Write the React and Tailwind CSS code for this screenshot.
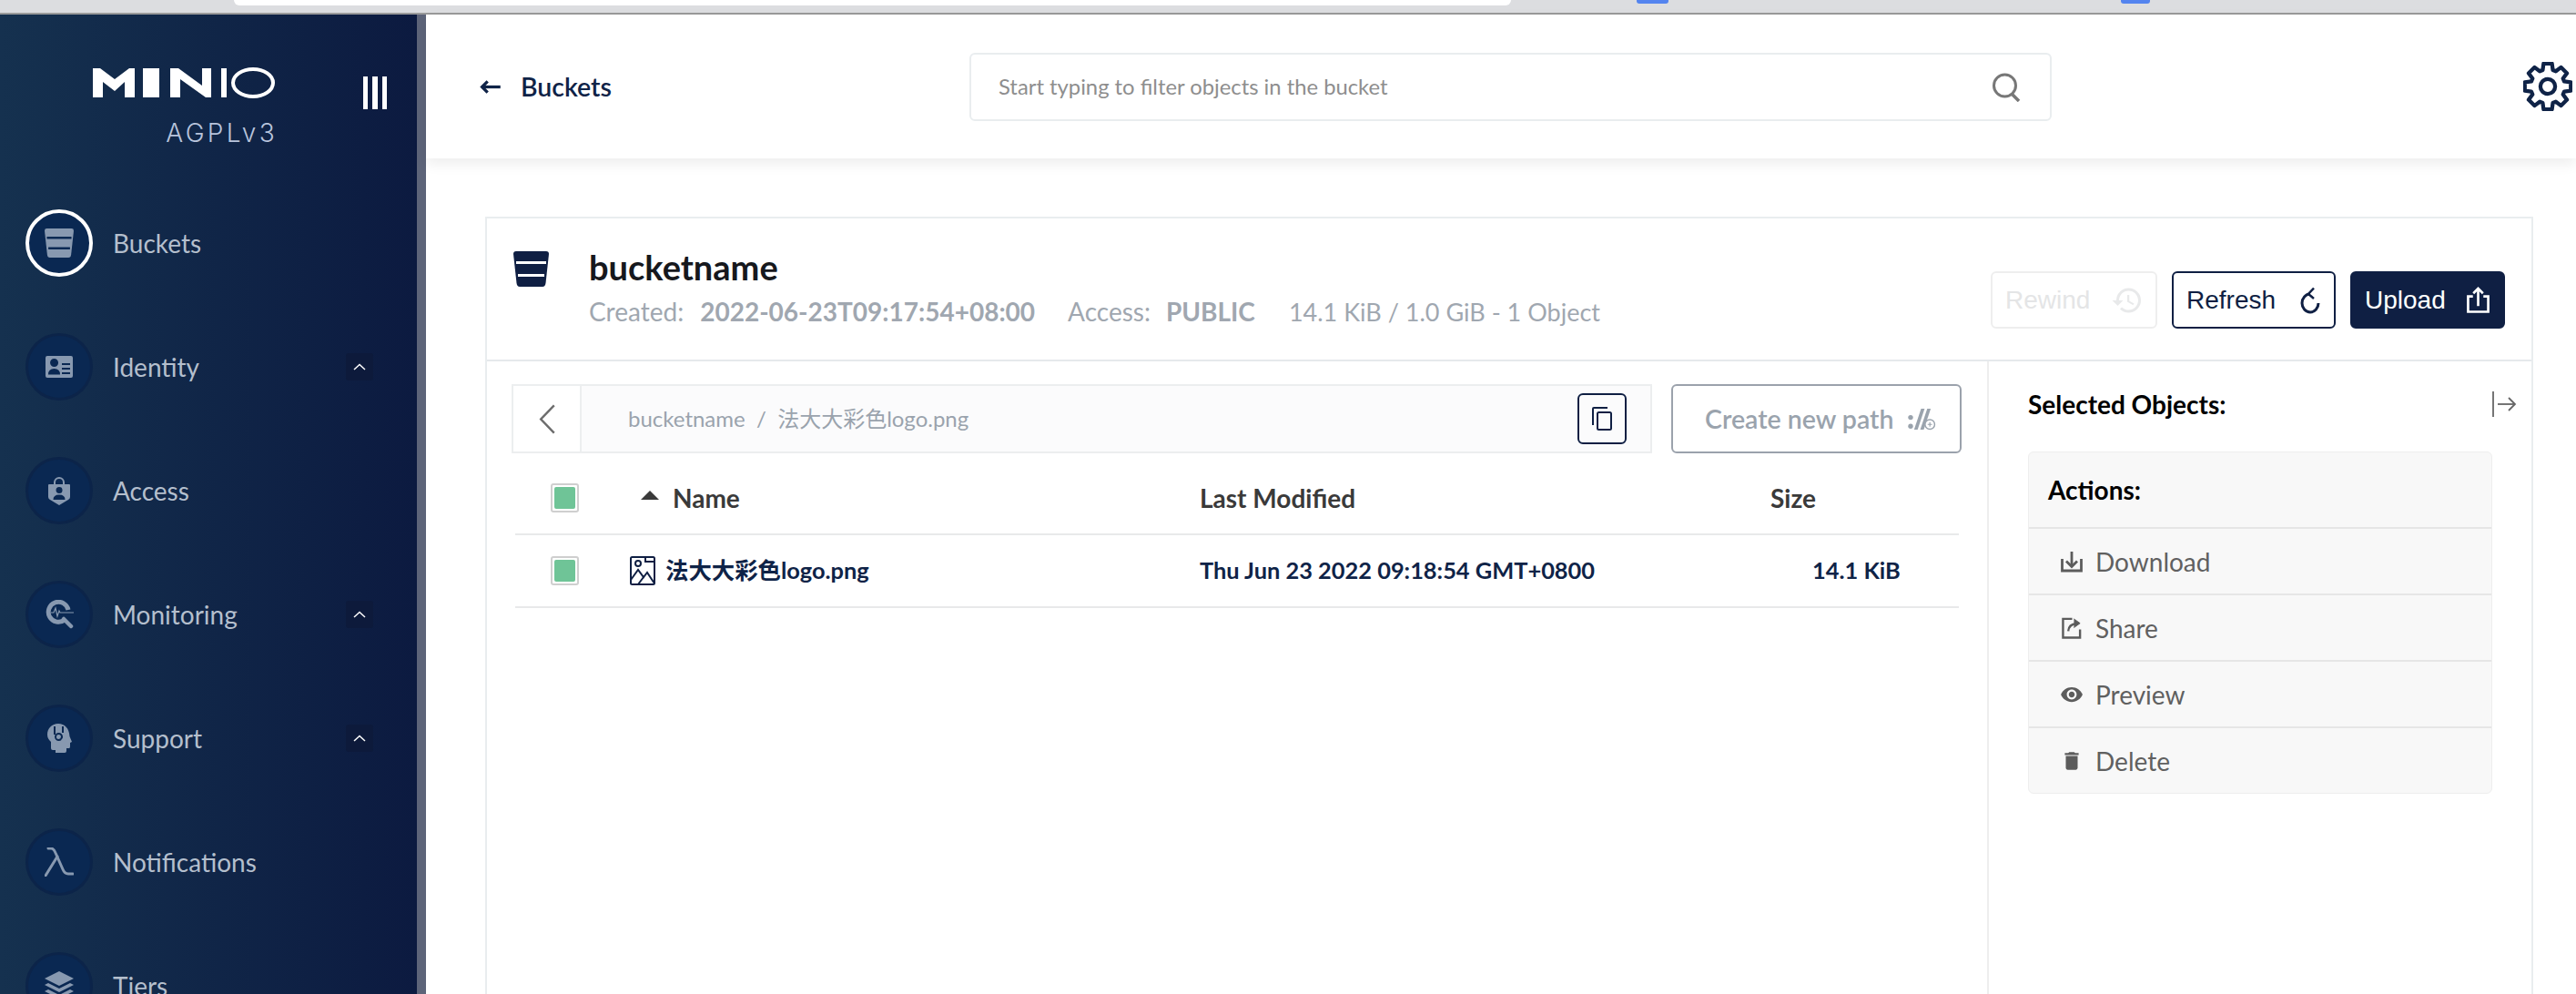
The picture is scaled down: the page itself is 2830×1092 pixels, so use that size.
import React from "react";
import { MdVisibility, MdDelete, MdHistory } from "react-icons/md";

const gearPath = (() => {
  const pts = [];
  const n = 8;
  for (let i = 0; i < n; i++) {
    const a = (i * 2 * Math.PI) / n - Math.PI / 2;
    const p = (r, d) => `${(12 + r * Math.cos(a + d)).toFixed(2)} ${(12 + r * Math.sin(a + d)).toFixed(2)}`;
    pts.push(p(8.4, -0.3), p(11.4, -0.18), p(11.4, 0.18), p(8.4, 0.3));
  }
  return "M" + pts.join("L") + "Z";
})();

const BucketGlyph = ({ className, line = "#0a2852" }) => (
  <svg viewBox="0 0 39 39" className={className} fill="currentColor">
    <path d="M3 0H36Q39 0 39 3L35.500 35Q35 39 32 39H7Q4 39 3.500 35L0 3Q0 0 3 0Z" />
    <rect x="3" y="11" width="33" height="3" fill={line} />
    <rect x="5" y="25" width="29" height="3" fill={line} />
  </svg>
);

const IdentityIcon = () => (
  <svg viewBox="0 0 30 24" className="w-[30px] h-[24px]" fill="currentColor">
    <path fillRule="evenodd" d="M2 0H28Q30 0 30 2V22Q30 24 28 24H2Q0 24 0 22V2Q0 0 2 0ZM9.500 3A4.500 4.500 0 1 0 9.600 12 4.500 4.500 0 0 0 9.500 3ZM3 20.500H16Q16 14 9.500 14T3 20.500ZM18 8V10H27V8ZM18 13V15H27V13ZM18 18V20H27V18Z" />
  </svg>
);
const AccessIcon = () => (
  <svg viewBox="0 0 24 32" className="w-[24px] h-[32px]" fill="currentColor">
    <path fillRule="evenodd" d="M6 9V7A6 6 0 0 1 18 7V9H23Q24 9 24 10V23Q24 25 22 26L12 32 2 26Q0 25 0 23V10Q0 9 1 9ZM8 9H16V7A4 4 0 0 0 8 7ZM12 12A3.500 3.500 0 1 0 12.100 19 3.500 3.500 0 0 0 12 12ZM5.500 26H18.500Q18.500 20.500 12 20.500T5.500 26Z" />
  </svg>
);
const MonitoringIcon = () => (
  <svg viewBox="0 0 32 32" className="w-[32px] h-[32px]" fill="none" stroke="currentColor">
    <path d="M26 11A11 11 0 1 0 22 22" strokeWidth="5" />
    <path d="M21 21L29 29" strokeWidth="4.500" strokeLinecap="round" />
    <path d="M7 14H10L12 9 14 18 16 12 17 14H32" strokeWidth="1.200" />
  </svg>
);
const SupportIcon = () => (
  <svg viewBox="0 0 27 32" className="w-[27px] h-[32px]" fill="currentColor">
    <path fillRule="evenodd" d="M12 0C5 0 0 5 0 12C0 16 2 18 4 20V27Q4 29 6 29H9V32H19Q21 32 21 30V27H24Q25 27 25 25V21L27 20 24.500 14C24 5 19 0 12 0ZM7 3V12H9V3ZM16 3V10H18V3ZM12.500 10A4.500 4.500 0 1 0 12.600 19 4.500 4.500 0 0 0 12.500 10ZM12.500 12A2.500 2.500 0 1 1 12.400 17 2.500 2.500 0 0 1 12.500 12Z" />
    <path d="M16 17L20 21" stroke="currentColor" strokeWidth="2" />
  </svg>
);
const LambdaIcon = () => (
  <svg viewBox="0 0 32 32" className="w-[32px] h-[32px]" fill="none" stroke="currentColor" strokeWidth="3" strokeLinecap="round">
    <path d="M4 1H7Q10 1 12 6L20 24Q22 29 26 29H31" />
    <path d="M14 10L1 31" />
  </svg>
);
const TiersIcon = () => (
  <svg viewBox="0 0 32 32" className="w-[32px] h-[32px]" fill="currentColor">
    <path d="M16 0L32 8 16 16 0 8Z" />
    <path d="M0 15L4 13 16 19 28 13 32 15 16 23Z" />
    <path d="M0 22L4 20 16 26 28 20 32 22 16 30Z" />
  </svg>
);

const Chevron = () => (
  <div className="w-[30px] h-[30px] rounded-[3px] bg-[#0d1a3b] flex items-center justify-center">
    <svg viewBox="0 0 14 8" className="w-[14px] h-[8px]" fill="none" stroke="white" strokeWidth="1.500">
      <path d="M1 7L7 1.500 13 7" />
    </svg>
  </div>
);

const NavItem = ({ label, icon, chevron, active }) => (
  <div className="h-[136px] flex items-center pl-[28px] pr-[48px] shrink-0">
    <div
      className={
        active
          ? "w-[74px] h-[74px] rounded-full border-[4px] border-white bg-[#0a2852] flex items-center justify-center text-[#8899b0] shrink-0"
          : "w-[74px] h-[74px] rounded-full border-[3px] border-[#0c2449] bg-[#0a2852] flex items-center justify-center text-[#8899b0] shrink-0"
      }
    >
      {icon}
    </div>
    <span className="ml-[22px] text-[28px] leading-none text-[#b4bfcd] flex-1">{label}</span>
    {chevron && <Chevron />}
  </div>
);

const Sidebar = () => (
  <aside className="w-[468px] shrink-0 flex border-r-[10px] border-[#5d6479] bg-linear-to-r from-[#15314f] to-[#0c1a40] overflow-hidden">
    <div className="w-full flex flex-col">
      <div className="h-[183px] shrink-0 flex">
        <div className="ml-[102px] mt-[58px] w-[200px] flex flex-col items-end">
          <svg viewBox="0 0 200 34" className="w-[200px] h-[34px]" fill="white" aria-label="MinIO logo">
            <path d="M0 33V1H8L24 13 40 1H46V33H35V16L24 26 11 16V33Z" />
            <rect x="55" y="1" width="18" height="32" />
            <path d="M85 33V1H94L120 20V1H130V33H124L96 13V33Z" />
            <rect x="141" y="1" width="6" height="32" />
            <ellipse cx="176" cy="17" rx="22" ry="15" fill="none" stroke="white" strokeWidth="4" />
          </svg>
          <div className="mt-[22px] text-[28px] leading-[32px] tracking-[3.300px] font-light text-[#b8c4dc] [font-family:Inter,sans-serif] mr-[-3px] whitespace-nowrap">AGPLv3</div>
        </div>
        <div className="ml-[97px] mt-[68px] flex gap-[5px] h-[36px]">
          <div className="w-[5px] h-full bg-white" />
          <div className="w-[6px] h-full bg-white" />
          <div className="w-[5px] h-full bg-white" />
        </div>
      </div>
      <NavItem active label="Buckets" icon={<BucketGlyph className="w-[32px] h-[32px]" />} />
      <NavItem label="Identity" icon={<IdentityIcon />} chevron />
      <NavItem label="Access" icon={<AccessIcon />} />
      <NavItem label="Monitoring" icon={<MonitoringIcon />} chevron />
      <NavItem label="Support" icon={<SupportIcon />} chevron />
      <NavItem label="Notifications" icon={<LambdaIcon />} />
      <NavItem label="Tiers" icon={<TiersIcon />} />
    </div>
  </aside>
);

const Header = () => (
  <header className="h-[158px] shrink-0 bg-white flex items-center relative z-10 shadow-[0_6px_14px_rgba(0,0,0,0.07)] pl-[59px]">
    <svg viewBox="0 0 24 16" className="w-[23px] h-[15px] text-[#0f2347]" fill="none" stroke="currentColor" strokeWidth="3.500">
      <path d="M24 8H3" />
      <path d="M9 1.500L2.500 8 9 14.500" />
    </svg>
    <span className="ml-[22px] text-[28.500px] font-semibold text-[#0f2347] leading-none w-[100px]">Buckets</span>
    <div className="ml-[393px] w-[1189px] h-[75px] border-2 border-[#e9edef] rounded-[6px] flex items-center pl-[30px] pr-[32px] mt-[1px]">
      <span className="text-[23.800px] text-[#8e8e8e] flex-1 leading-none">Start typing to filter objects in the bucket</span>
      <svg viewBox="0 0 32 32" className="w-[32px] h-[32px] text-[#777777]" fill="none" stroke="currentColor" strokeWidth="3">
        <circle cx="14.500" cy="14" r="12" />
        <path d="M22 23L30 31" strokeWidth="3.500" />
      </svg>
    </div>
    <svg viewBox="0 0 24 24" className="ml-[518px] w-[54px] h-[54px] text-[#0f2347] shrink-0" fill="none" stroke="currentColor" strokeWidth="1.900">
      <path d={gearPath} strokeLinejoin="round" />
      <circle cx="12" cy="12" r="3.600" />
    </svg>
  </header>
);

const Btn = ({ children, className }) => (
  <div className={"h-[63px] rounded-[6px] border-2 flex items-center justify-between pl-[14px] pr-[15px] text-[28px] [font-family:'Liberation_Sans',sans-serif] " + className}>
    {children}
  </div>
);

const BucketInfo = () => (
  <div className="h-[157px] border-b-2 border-[#e5e9ec] shrink-0 flex relative pl-[29px]">
    <div className="pt-[36px] shrink-0">
      <BucketGlyph className="w-[39px] h-[39px] text-[#0f1f43]" line="#ffffff" />
    </div>
    <div className="ml-[44px] flex-1 pt-[30px]">
      <div className="text-[38px] leading-[46px] font-bold text-[#16181d]">bucketname</div>
      <div className="mt-[8px] text-[28px] leading-[36px] text-[#a0a7b0] flex items-baseline whitespace-nowrap">
        <span>Created:</span>
        <span className="ml-[18px] font-bold">2022-06-23T09:17:54+08:00</span>
        <span className="ml-[36px]">Access:</span>
        <span className="ml-[17px] font-bold">PUBLIC</span>
        <span className="ml-[37px] text-[27px]">14.1 KiB / 1.0 GiB - 1 Object</span>
      </div>
    </div>
    <div className="flex gap-[16px] pt-[58px] pr-[29px]">
      <Btn className="w-[183px] border-[#eeeeee] text-[#e4e5e6]">
        <span>Rewind</span>
        <MdHistory className="w-[36px] h-[36px] text-[#e8e9ea] mr-[-2px]" />
      </Btn>
      <Btn className="w-[180px] border-[#0f1f43] text-[#0f1f43]">
        <span>Refresh</span>
        <svg viewBox="0 0 22 30" className="w-[22px] h-[30px]" fill="none" stroke="currentColor" strokeWidth="3">
          <path d="M11 8A9 10 0 1 0 20 18" />
          <path d="M15 1.500L9 8 15 13" strokeWidth="2.500" />
        </svg>
      </Btn>
      <Btn className="w-[170px] border-[#0f1f43] bg-[#0f1f43] text-white">
        <span>Upload</span>
        <svg viewBox="0 0 26 30" className="w-[25px] h-[29px]" fill="none" stroke="currentColor" strokeWidth="2.800">
          <path d="M7 11H1.500V28.500H24.500V11H19" />
          <path d="M13 22V2" />
          <path d="M7.500 7.500L13 2 18.500 7.500" />
        </svg>
      </Btn>
    </div>
  </div>
);

const PathBar = () => (
  <div className="flex gap-[21px] shrink-0">
    <div className="w-[1253px] h-[76px] border-2 border-[#eceeef] bg-[#fbfbfc] flex items-center text-[24px] text-[#9aa3ad]">
      <div className="w-[75px] h-full bg-white border-r-2 border-[#eceeef] flex items-center justify-center shrink-0">
        <svg viewBox="0 0 20 34" className="w-[20px] h-[33px] text-[#6c6c6c]" fill="none" stroke="currentColor" strokeWidth="2.500">
          <path d="M18 1.500L3 17 18 32.500" />
        </svg>
      </div>
      <span className="ml-[51px] flex-1 leading-none whitespace-nowrap">bucketname&nbsp;&nbsp;/&nbsp;&nbsp;法大大彩色logo.png</span>
      <div className="w-[54px] h-[56px] rounded-[6px] border-2 border-[#0f1f43] flex items-center justify-center mr-[26px] shrink-0 text-[#0f1f43]">
        <svg viewBox="0 0 22 26" className="w-[22px] h-[26px]" fill="none" stroke="currentColor" strokeWidth="2">
          <path d="M17 1H2Q1 1 1 2V20" />
          <rect x="6" y="6" width="15" height="19" rx="1.500" />
        </svg>
      </div>
    </div>
    <div className="w-[319px] h-[76px] border-2 border-[#9ba2ac] rounded-[6px] flex items-center pl-[35px] text-[28.500px] font-semibold text-[#9aa3ad] leading-none whitespace-nowrap">
      <span>Create new path</span>
      <svg viewBox="0 0 32 26" className="ml-[16px] w-[31px] h-[25px]" fill="currentColor">
        <circle cx="3" cy="11" r="2.800" />
        <circle cx="3" cy="21" r="2.800" />
        <path d="M7 25L15 1H19L11 25Z" />
        <path d="M14 25L22 1H26L18 25Z" />
        <circle cx="25" cy="19" r="5.500" fill="white" stroke="currentColor" strokeWidth="1.500" />
        <path d="M25 16.500V21.500M22.500 19H27.500" stroke="currentColor" strokeWidth="1.200" />
      </svg>
    </div>
  </div>
);

const Check = () => (
  <div className="ml-[39px] w-[31px] h-[32px] border-2 border-[#cfcfcf] rounded-[3px] bg-white p-[2px] shrink-0">
    <div className="w-full h-full rounded-[2px] bg-[#6fc497]" />
  </div>
);

const Objects = () => (
  <div className="ml-[4px] w-[1586px]">
    <div className="h-[90px] pt-[9px] border-b-2 border-[#e8e9ea] grid grid-cols-[126px_626px_627px_1fr] items-center text-[28px] font-bold text-[#3a3a3a] leading-none">
      <Check />
      <div className="flex items-center">
        <svg viewBox="0 0 20 10" className="ml-[12px] w-[20px] h-[10px] mb-[6px]" fill="#3a3a3a">
          <path d="M10 0L20 10H0Z" />
        </svg>
        <span className="ml-[15px]">Name</span>
      </div>
      <span>Last Modified</span>
      <span>Size</span>
    </div>
    <div className="h-[80px] border-b-2 border-[#e8e9ea] grid grid-cols-[126px_626px_627px_1fr] items-center text-[25.400px] font-bold text-[#0f2347] leading-none">
      <Check />
      <div className="flex items-center">
        <svg viewBox="0 0 28 32" className="w-[28px] h-[32px]" fill="none" stroke="#0f1f43" strokeWidth="2">
          <rect x="1" y="1" width="26" height="30" rx="1.500" />
          <circle cx="9" cy="8" r="3" />
          <path d="M17 1V6H27" />
          <path d="M1 26L9 15 15 23 19 18 27 30" />
          <path d="M9 31L15 23" />
        </svg>
        <span className="ml-[11px] whitespace-nowrap">法大大彩色logo.png</span>
      </div>
      <span className="whitespace-nowrap">Thu Jun 23 2022 09:18:54 GMT+0800</span>
      <span className="pl-[46px] whitespace-nowrap">14.1 KiB</span>
    </div>
  </div>
);

const ActionRow = ({ icon, label }) => (
  <div className="h-[73px] border-t-2 border-[#e6e6e6] flex items-center pl-[34px] text-[28px] text-[#606060] leading-none">
    <div className="w-[26px] h-[30px] flex items-center justify-center shrink-0 text-[#5c5c5c]">{icon}</div>
    <span className="ml-[13px]">{label}</span>
  </div>
);

const RightPanel = () => (
  <div className="flex-1 border-l-2 border-[#eeeeee] pl-[43px]">
    <div className="h-[99px] w-[537px] pb-[6px] flex items-center justify-between">
      <span className="text-[28px] font-bold text-black leading-none">Selected Objects:</span>
      <svg viewBox="0 0 28 28" className="w-[28px] h-[28px] text-[#666666]" fill="none" stroke="currentColor" strokeWidth="1.800">
        <path d="M2 0V28" />
        <path d="M7 14H26" />
        <path d="M19 7L26 14 19 21" />
      </svg>
    </div>
    <div className="w-[510px] h-[376px] bg-[#f8f8f8] border border-[#eeeeee] rounded-[6px]">
      <div className="h-[82px] flex items-center pl-[21px] text-[28px] font-bold text-black leading-none">Actions:</div>
      <ActionRow
        label="Download"
        icon={
          <svg viewBox="0 0 24 24" className="w-[24px] h-[24px]" fill="none" stroke="currentColor" strokeWidth="2.800">
            <path d="M1.500 9V22H22.500V9" />
            <path d="M12 1V17" />
            <path d="M6 11.500L12 17.500 18 11.500" />
          </svg>
        }
      />
      <ActionRow
        label="Share"
        icon={
          <svg viewBox="0 0 24 26" className="w-[23px] h-[25px]" fill="none" stroke="currentColor" strokeWidth="2.500">
            <path d="M12 3H1.500V24.500H21V15" />
            <path d="M7.500 17Q8 9 17 8.500" />
            <path d="M14 3L21 8 14 13" fill="currentColor" strokeWidth="1" />
          </svg>
        }
      />
      <ActionRow label="Preview" icon={<MdVisibility className="w-[26px] h-[26px]" />} />
      <ActionRow label="Delete" icon={<MdDelete className="w-[30px] h-[30px]" />} />
    </div>
  </div>
);

export default function App() {
  return (
    <div className="w-[2830px] h-[1092px] overflow-hidden flex flex-col bg-white [font-family:Lato,'Noto_Sans_CJK_SC',sans-serif]">
      <div className="h-[16px] shrink-0 bg-[#dcdde0] border-b-2 border-[#9a9a9a] flex items-start">
        <div className="ml-[257px] w-[1403px] h-[6px] bg-white rounded-b-[6px]" />
        <div className="ml-[138px] w-[35px] h-[4px] bg-[#5484ef] rounded-b-[3px]" />
        <div className="ml-[497px] w-[32px] h-[4px] bg-[#5484ef] rounded-b-[3px]" />
      </div>
      <div className="flex flex-1 min-h-0">
        <Sidebar />
        <main className="flex-1 min-w-0 flex flex-col">
          <Header />
          <div className="flex-1 min-h-0 pl-[65px] pr-[47px] pt-[64px]">
            <div className="h-[1000px] border-2 border-[#e9edef] flex flex-col">
              <BucketInfo />
              <div className="flex flex-1">
                <div className="w-[1648px] shrink-0 pl-[27px] pt-[25px]">
                  <PathBar />
                  <Objects />
                </div>
                <RightPanel />
              </div>
            </div>
          </div>
        </main>
      </div>
    </div>
  );
}
